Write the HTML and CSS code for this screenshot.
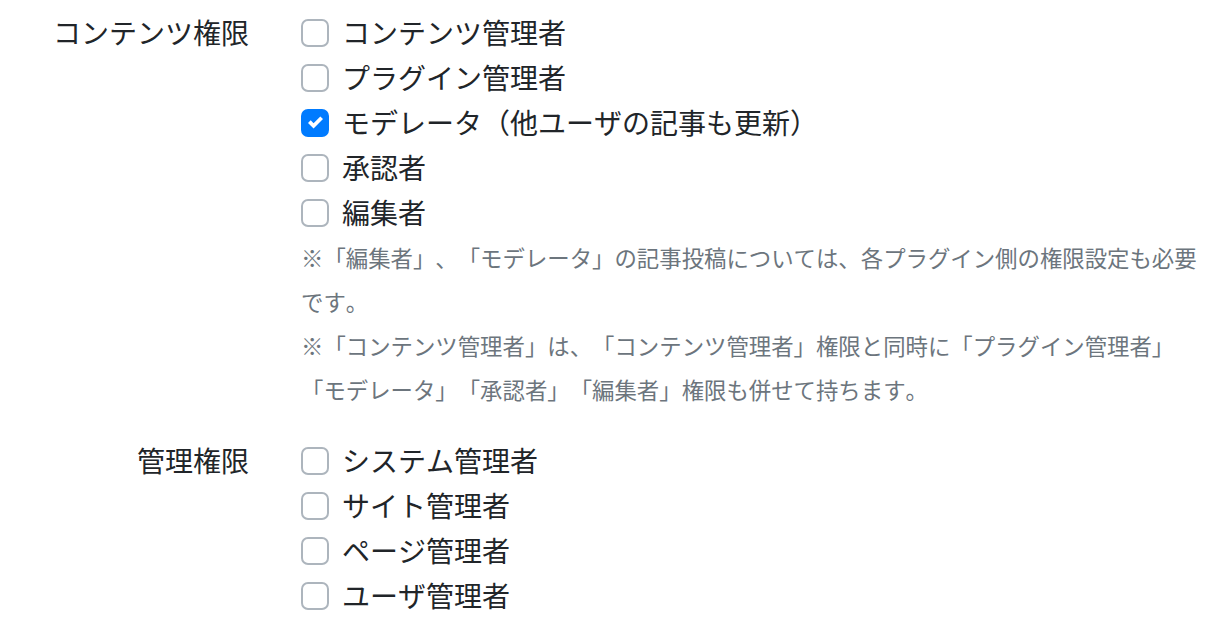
FILE: index.html
```html
<!DOCTYPE html>
<html lang="ja">
<head>
    <meta charset="UTF-8">
    <title>権限設定</title>
    <link rel="stylesheet" href="styles.css">
</head>
<body>

<div class="container">
    <div class="form-row">
        <div class="form-label">コンテンツ権限</div>
        <div class="form-field">
            <label class="check"><span class="check-box"></span>コンテンツ管理者</label>
            <label class="check"><span class="check-box"></span>プラグイン管理者</label>
            <label class="check"><span class="check-box checked"><svg viewBox="0 0 8 8"><path fill="#fff" d="M6.564.75l-3.59 3.612-1.538-1.55L0 4.26 2.974 7.25 8 2.193z"/></svg></span>モデレータ（他ユーザの記事も更新）</label>
            <label class="check"><span class="check-box"></span>承認者</label>
            <label class="check"><span class="check-box"></span>編集者</label>
            <div class="note">
                <div>※「編集者」、「モデレータ」の記事投稿については、各プラグイン側の権限設定も必要です。</div>
                <div>※「コンテンツ管理者」は、「コンテンツ管理者」権限と同時に「プラグイン管理者」「モデレータ」「承認者」「編集者」権限も併せて持ちます。</div>
            </div>
        </div>
    </div>

    <div class="form-row">
        <div class="form-label">管理権限</div>
        <div class="form-field">
            <label class="check"><span class="check-box"></span>システム管理者</label>
            <label class="check"><span class="check-box"></span>サイト管理者</label>
            <label class="check"><span class="check-box"></span>ページ管理者</label>
            <label class="check"><span class="check-box"></span>ユーザ管理者</label>
        </div>
    </div>
</div>

</body>
</html>
```

FILE: styles.css
```css
body {
    font-family: "Noto Sans CJK JP", "Noto Sans", sans-serif;
    margin: 0;
    padding: 0;
    background-color: #fff;
    color: #212529;
    text-spacing-trim: space-all;
    font-kerning: none;
}

.container {
    padding-top: 10px;
}

.form-row {
    display: grid;
    grid-template-columns: 249px 900px;
    column-gap: 52px;
    margin-bottom: 27px;
}

.form-label {
    font-size: 28px;
    line-height: 45px;
    text-align: right;
}

.form-field {
    display: flex;
    flex-direction: column;
}

.check {
    display: flex;
    align-items: center;
    height: 45px;
    font-size: 28px;
    line-height: 45px;
    cursor: pointer;
}

.check-box {
    display: flex;
    align-items: center;
    justify-content: center;
    box-sizing: border-box;
    width: 28px;
    height: 28px;
    margin-right: 13px;
    border: 2px solid #adb5bd;
    border-radius: 7px;
    background-color: #fff;
}

.check-box.checked {
    background-color: #007bff;
    border-color: #007bff;
}

.check-box svg {
    width: 15px;
    height: 15px;
}

.note {
    font-size: 22.4px;
    line-height: 44px;
    color: #6c757d;
}
```
